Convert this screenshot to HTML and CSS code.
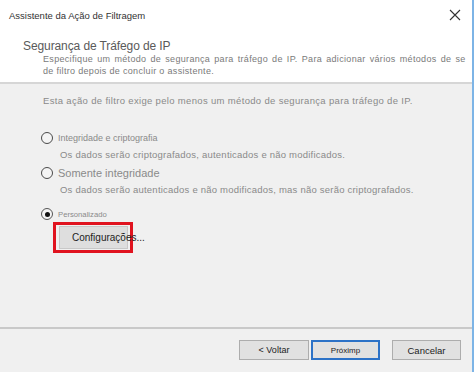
FILE: index.html
```html
<!DOCTYPE html>
<html lang="pt">
<head>
<meta charset="utf-8">
<link rel="stylesheet" href="styles.css">
</head>
<body>
<div class="dialog">
  <div class="header">
    <div class="titlebar">
      <span class="title">Assistente da Ação de Filtragem</span>
      <svg class="close" width="12" height="12" viewBox="0 0 12 12"><path d="M1 1L11 11M11 1L1 11" stroke="#333" stroke-width="1.1" fill="none"/></svg>
    </div>
    <div class="heading">Segurança de Tráfego de IP</div>
    <div class="desc"><span class="just">Especifique um método de segurança para tráfego de IP. Para adicionar vários métodos de se</span><br>de filtro depois de concluir o assistente.</div>
  </div>
  <div class="body">
    <div class="intro">Esta ação de filtro exige pelo menos um método de segurança para tráfego de IP.</div>
    <div class="option opt1">
      <span class="radio"></span><span class="lbl small">Integridade e criptografia</span>
    </div>
    <div class="hint">Os dados serão criptografados, autenticados e não modificados.</div>
    <div class="option opt2">
      <span class="radio"></span><span class="lbl big">Somente integridade</span>
    </div>
    <div class="hint">Os dados serão autenticados e não modificados, mas não serão criptografados.</div>
    <div class="option opt3">
      <span class="radio checked"></span><span class="lbl tiny">Personalizado</span>
    </div>
    <div class="cfgwrap">
      <div class="redbox"><div class="cfgbtn"></div></div>
      <span class="cfgtext">Configurações...</span>
    </div>
  </div>
  <div class="footer">
    <div class="btn back">&lt; Voltar</div>
    <div class="btn primary">Próximp</div>
    <div class="btn cancel">Cancelar</div>
  </div>
</div>
</body>
</html>
```
FILE: styles.css
```css
* { box-sizing: border-box; }
html, body { margin: 0; padding: 0; background: #f0f0f0; }
body { width: 474px; height: 372px; overflow: hidden; font-family: "Liberation Sans", Arial, sans-serif; }
.dialog {
  width: 474px; height: 372px;
  border-right: 2px solid #7db4e6;
  display: flex; flex-direction: column;
  overflow: hidden;
}
.header {
  background: #fff;
  height: 84px;
  border-bottom: 2px solid #d6d6d6;
  white-space: nowrap;
  overflow: hidden;
  flex: none;
}
.titlebar { display: flex; align-items: center; justify-content: space-between; height: 30px; padding: 0 11px 0 9px; }
.title { font-size: 9.5px; color: #333; }
.heading { font-size: 12px; color: #5a5a5a; padding-left: 23px; margin-top: 8px; line-height: 16px; letter-spacing: -0.1px; }
.desc { font-size: 9px; color: #7a7a7a; padding-left: 43px; line-height: 11.5px; letter-spacing: 0.32px; }
.just { word-spacing: 1.3px; }
.body { flex: 1; white-space: nowrap; padding-top: 11px; overflow: hidden; }
.intro { font-size: 9.5px; color: #8a8a8a; padding-left: 43px; letter-spacing: 0.33px; line-height: 12px; }
.option { display: flex; align-items: center; padding-left: 41px; height: 16px; }
.opt1 { margin-top: 23px; }
.opt2 { margin-top: 4px; }
.opt3 { margin-top: 10px; }
.radio { width: 12px; height: 12px; border-radius: 50%; border: 1.6px solid #4a4a4a; background: #f4f4f4; position: relative; flex: none; }
.radio.checked { border: 1px solid #555; }
.radio.checked::after { content: ""; position: absolute; left: 2.5px; top: 2.5px; width: 5px; height: 5px; border-radius: 50%; background: #111; }
.lbl { color: #8a8a8a; margin-left: 5px; }
.small { font-size: 9px; }
.big { font-size: 11px; }
.tiny { font-size: 7.7px; }
.hint { font-size: 9.5px; color: #8a8a8a; padding-left: 60px; letter-spacing: 0.22px; line-height: 12px; margin-top: 3px; }
.cfgwrap { position: relative; margin-left: 53px; margin-top: 0; height: 32px; }
.redbox { width: 80px; height: 31px; border: 3px solid #e0131f; padding: 1px 2px 1px 3px; }
.cfgbtn { width: 69px; height: 23px; background: #dedede; border: 1px solid #c8c8c8; }
.cfgtext { position: absolute; left: 19px; top: 10px; font-size: 10px; line-height: 12px; color: #222; }
.footer {
  height: 45px; flex: none;
  border-top: 2px solid #c9c9c9;
  display: flex; align-items: center; justify-content: flex-end;
  padding-right: 11px; padding-bottom: 1px;
}
.btn {
  width: 70px; height: 20px; background: #e1e1e1; border: 1px solid #adadad;
  font-size: 9px; color: #222; display: flex; align-items: center; justify-content: center;
  margin-left: 2px;
}
.btn.primary { border: 2px solid #2c72c7; width: 69px; font-size: 8px; }
.btn.cancel { margin-left: 12px; width: 69px; font-size: 9.5px; }
```
